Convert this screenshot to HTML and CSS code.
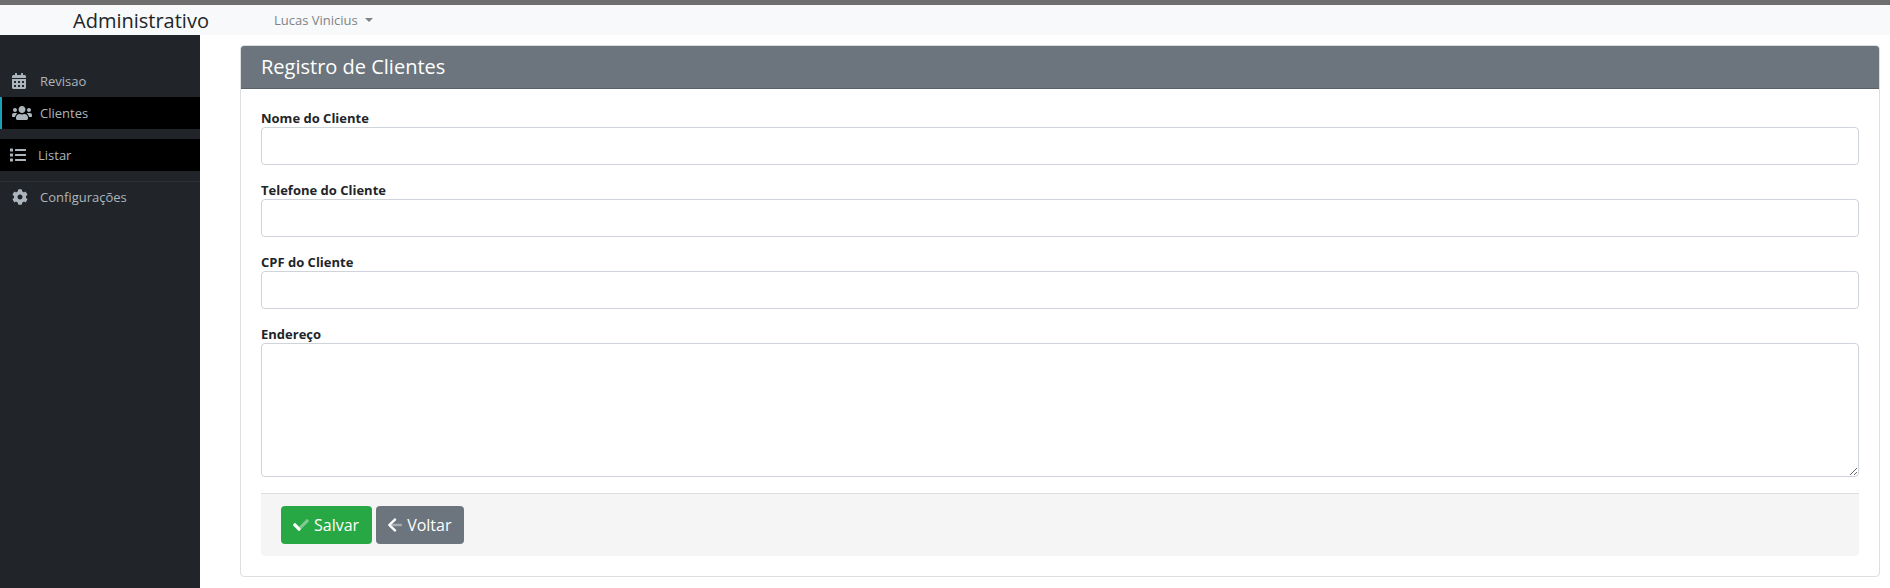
FILE: index.html
```html
<!DOCTYPE html>
<html lang="pt-BR">
<head>
    <meta charset="UTF-8">
    <title>Registro de Clientes</title>
    <link rel="stylesheet" href="styles.css">
</head>
<body>
    <nav class="topbar">
        <a class="brand">Administrativo</a>
        <a class="userMenu">Lucas Vinicius<span class="caret"></span></a>
    </nav>
    <div class="wrapper">
        <aside class="sidebar">
            <a class="navItem">
                <svg class="navIcon calendar" viewBox="0 0 448 512"><path d="M0 464c0 26.500 21.500 48 48 48h352c26.500 0 48-21.500 48-48V192H0v272zm320-196c0-6.600 5.400-12 12-12h40c6.600 0 12 5.400 12 12v40c0 6.600-5.400 12-12 12h-40c-6.600 0-12-5.400-12-12v-40zm0 128c0-6.600 5.400-12 12-12h40c6.600 0 12 5.400 12 12v40c0 6.600-5.400 12-12 12h-40c-6.600 0-12-5.400-12-12v-40zM192 268c0-6.600 5.400-12 12-12h40c6.600 0 12 5.400 12 12v40c0 6.600-5.400 12-12 12h-40c-6.600 0-12-5.400-12-12v-40zm0 128c0-6.600 5.400-12 12-12h40c6.600 0 12 5.400 12 12v40c0 6.600-5.400 12-12 12h-40c-6.600 0-12-5.400-12-12v-40zM64 268c0-6.600 5.400-12 12-12h40c6.600 0 12 5.400 12 12v40c0 6.600-5.400 12-12 12H76c-6.600 0-12-5.400-12-12v-40zm0 128c0-6.600 5.400-12 12-12h40c6.600 0 12 5.400 12 12v40c0 6.600-5.400 12-12 12H76c-6.600 0-12-5.400-12-12v-40zM400 64h-48V16c0-8.800-7.200-16-16-16h-32c-8.800 0-16 7.200-16 16v48H160V16c0-8.800-7.200-16-16-16h-32c-8.800 0-16 7.200-16 16v48H48C21.500 64 0 85.500 0 112v48h448v-48c0-26.500-21.500-48-48-48z"/></svg>
                Revisao
            </a>
            <a class="navItem active">
                <svg class="navIcon users" viewBox="0 0 640 512"><path d="M96 224c35.300 0 64-28.700 64-64s-28.700-64-64-64-64 28.700-64 64 28.700 64 64 64zm448 0c35.300 0 64-28.700 64-64s-28.700-64-64-64-64 28.700-64 64 28.700 64 64 64zm32 32h-64c-17.600 0-33.500 7.100-45.100 18.600 40.300 22.100 68.900 62 75.100 109.400h66c17.700 0 32-14.300 32-32v-32c0-35.300-28.700-64-64-64zm-256 0c61.900 0 112-50.100 112-112S381.900 32 320 32 208 82.100 208 144s50.100 112 112 112zm76.800 32h-8.300c-20.800 10-43.900 16-68.500 16s-47.600-6-68.500-16h-8.300C179.600 288 128 339.600 128 403.200V432c0 26.500 21.500 48 48 48h288c26.500 0 48-21.500 48-48v-28.800c0-63.600-51.600-115.200-115.200-115.200zm-223.700-13.400C161.500 263.100 145.600 256 128 256H64c-35.300 0-64 28.700-64 64v32c0 17.700 14.300 32 32 32h65.900c6.300-47.400 34.900-87.300 75.200-109.400z"/></svg>
                Clientes
            </a>
            <a class="navItem subItem">
                <svg class="navIcon" viewBox="0 0 512 512"><path d="M80 368H16a16 16 0 0 0-16 16v64a16 16 0 0 0 16 16h64a16 16 0 0 0 16-16v-64a16 16 0 0 0-16-16zm0-320H16A16 16 0 0 0 0 64v64a16 16 0 0 0 16 16h64a16 16 0 0 0 16-16V64a16 16 0 0 0-16-16zm0 160H16a16 16 0 0 0-16 16v64a16 16 0 0 0 16 16h64a16 16 0 0 0 16-16v-64a16 16 0 0 0-16-16zm416 176H176a16 16 0 0 0-16 16v32a16 16 0 0 0 16 16h320a16 16 0 0 0 16-16v-32a16 16 0 0 0-16-16zm0-320H176a16 16 0 0 0-16 16v32a16 16 0 0 0 16 16h320a16 16 0 0 0 16-16V80a16 16 0 0 0-16-16zm0 160H176a16 16 0 0 0-16 16v32a16 16 0 0 0 16 16h320a16 16 0 0 0 16-16v-32a16 16 0 0 0-16-16z"/></svg>
                Listar
            </a>
            <a class="navItem configItem">
                <svg class="navIcon" viewBox="0 0 512 512"><path d="M487.400 315.700l-42.600-24.600c4.300-23.200 4.300-47 0-70.200l42.600-24.600c4.900-2.800 7.100-8.600 5.500-14-11.100-35.600-30-67.800-54.700-94.600-3.800-4.100-10-5.100-14.800-2.300L380.800 110c-17.900-15.400-38.500-27.300-60.800-35.100V25.800c0-5.600-3.900-10.500-9.400-11.700-36.700-8.200-74.300-7.800-109.200 0-5.500 1.200-9.400 6.100-9.400 11.700V75c-22.200 7.900-42.800 19.800-60.800 35.100L88.700 85.500c-4.900-2.800-11-1.900-14.800 2.300-24.700 26.700-43.600 58.900-54.700 94.600-1.700 5.400.6 11.200 5.500 14L67.300 221c-4.300 23.200-4.300 47 0 70.200l-42.600 24.600c-4.900 2.800-7.100 8.600-5.500 14 11.100 35.600 30 67.800 54.700 94.600 3.800 4.100 10 5.100 14.800 2.300l42.600-24.600c17.900 15.400 38.500 27.300 60.800 35.100v49.200c0 5.600 3.900 10.500 9.400 11.700 36.700 8.200 74.300 7.800 109.200 0 5.500-1.200 9.400-6.100 9.400-11.700v-49.200c22.200-7.900 42.800-19.800 60.800-35.100l42.600 24.600c4.900 2.800 11 1.900 14.800-2.300 24.700-26.700 43.600-58.900 54.700-94.600 1.500-5.500-.7-11.300-5.600-14.100zM256 336c-44.100 0-80-35.900-80-80s35.900-80 80-80 80 35.900 80 80-35.900 80-80 80z"/></svg>
                Configurações
            </a>
        </aside>
        <main class="content">
            <div class="card">
                <h4 class="cardHeader">Registro de Clientes</h4>
                <form class="cardBody">
                    <div class="formGroup">
                        <label class="fieldLabel">Nome do Cliente</label>
                        <input type="text" class="field">
                    </div>
                    <div class="formGroup">
                        <label class="fieldLabel">Telefone do Cliente</label>
                        <input type="text" class="field">
                    </div>
                    <div class="formGroup">
                        <label class="fieldLabel">CPF do Cliente</label>
                        <input type="text" class="field">
                    </div>
                    <div class="formGroup">
                        <label class="fieldLabel">Endereço</label>
                        <textarea class="field area"></textarea>
                    </div>
                    <div class="formFooter">
                        <button type="button" class="button green">
                            <svg class="btnIcon check" viewBox="0 0 512 512">
                                <path d="M7.500 273l166.400 166.400c10 10 26.200 10 36.200 0l36.200-36.200c10-10 10-26.200 0-36.200L79.900 200.600c-10-10-26.200-10-36.200 0L7.500 236.800c-10 10-10 26.200 0 36.200z"/>
                                <path class="faded" d="M192 312.700L432.100 72.600c10-10 26.200-10 36.200 0l36.200 36.200c10 10 10 26.200 0 36.200L246.300 403.200c10-10 10-26.200 0-36.200z"/>
                            </svg>
                            Salvar
                        </button>
                        <button type="button" class="button gray">
                            <svg class="btnIcon arrow" viewBox="0 0 448 512">
                                <path d="M257.500 445.100l-22.200 22.200c-9.400 9.400-24.600 9.400-33.900 0L7 273c-9.400-9.400-9.400-24.600 0-33.900L201.400 44.700c9.400-9.400 24.600-9.400 33.900 0l22.200 22.200c9.500 9.500 9.300 25-.4 34.300L136.600 216 100 256l36.600 40 120.500 114.800c9.800 9.300 10 24.800.4 34.300z"/>
                                <path class="faded" d="M136.600 216H424c13.300 0 24 10.700 24 24v32c0 13.300-10.700 24-24 24H136.600L100 256z"/>
                            </svg>
                            Voltar
                        </button>
                    </div>
                </form>
            </div>
        </main>
    </div>
</body>
</html>
```

FILE: styles.css
```css
* {
    box-sizing: border-box;
}
html, body {
    height: 100%;
    margin: 0;
}
body {
    background-color: #ffffff;
    color: #212529;
    display: flex;
    flex-direction: column;
    font-family: "Open Sans", "Liberation Sans", sans-serif;
    font-size: 14px;
    overflow: hidden;
}
.topbar {
    align-items: center;
    background-color: #f8f9fa;
    border-top: 5px solid #6e6e6e;
    display: flex;
    height: 35px;
    padding-left: 73px;
}
.brand {
    color: #212529;
    font-size: 20px;
    width: 201px;
}
.userMenu {
    color: #7f8388;
    font-size: 13px;
}
.caret {
    border-left: 4px solid transparent;
    border-right: 4px solid transparent;
    border-top: 4px solid #7f8388;
    display: inline-block;
    margin-left: 7px;
    vertical-align: 3px;
}
.wrapper {
    display: flex;
    flex: 1;
    min-height: 0;
}
.sidebar {
    background-color: #212529;
    flex: 0 0 200px;
    padding-top: 30px;
}
.navItem {
    align-items: center;
    color: #adb5bd;
    display: flex;
    font-size: 13px;
    height: 32px;
    padding-left: 12px;
}
.navIcon {
    fill: #adb5bd;
    height: 16px;
    margin-right: 12px;
    width: 16px;
}
.calendar {
    margin-right: 14px;
    width: 14px;
}
.active {
    background-color: #000000;
    border-left: 2px solid #17a2b8;
    padding-left: 10px;
}
.users {
    margin-right: 8px;
    width: 20px;
}
.subItem {
    background-color: #000000;
    margin-top: 10px;
    padding-left: 10px;
}
.configItem {
    border-top: 1px solid #2c3035;
    height: 31px;
    margin-top: 10px;
}
.content {
    flex: 1;
    padding: 10px 10px 11px 40px;
}
.card {
    background-color: #ffffff;
    border: 1px solid #dcdfe2;
    border-radius: 4px;
    height: 100%;
    overflow: hidden;
}
.cardHeader {
    background-color: #6c757d;
    border-bottom: 1px solid #5a6268;
    color: #ffffff;
    font-size: 20px;
    font-weight: 400;
    height: 43px;
    line-height: 42px;
    margin: 0;
    padding-left: 20px;
}
.cardBody {
    padding: 18px 20px 0 20px;
}
.formGroup {
    margin-bottom: 14px;
}
.fieldLabel {
    color: #212529;
    display: block;
    font-size: 13px;
    font-weight: 700;
    line-height: 18px;
    padding-top: 2px;
}
.field {
    background-color: #ffffff;
    border: 1px solid #ced4da;
    border-radius: 4px;
    display: block;
    height: 38px;
    width: 100%;
}
.area {
    height: 134px;
    resize: vertical;
}
.formFooter {
    background-color: #f5f5f5;
    border-top: 1px solid #dcdfe2;
    border-radius: 0 0 4px 4px;
    display: flex;
    gap: 4px;
    height: 63px;
    margin-top: 16px;
    padding: 12px 20px;
}
.button {
    align-items: center;
    border: none;
    border-radius: 4px;
    color: #ffffff;
    display: flex;
    font-family: "Open Sans", "Liberation Sans", sans-serif;
    font-size: 16px;
    gap: 5px;
    height: 38px;
    padding: 0 13px 0 12px;
}
.green {
    background-color: #28a745;
}
.gray {
    background-color: #6c757d;
}
.btnIcon {
    fill: #ffffff;
    height: 16px;
}
.check {
    width: 16px;
}
.arrow {
    width: 14px;
}
.faded {
    opacity: 0.4;
}
```
